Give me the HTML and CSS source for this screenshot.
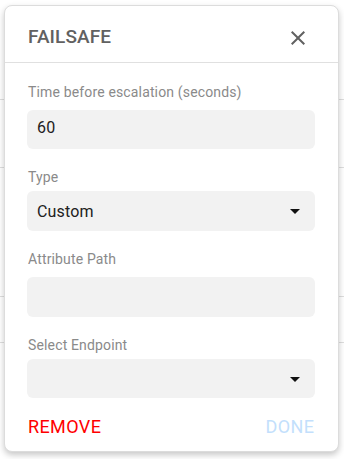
FILE: index.html
```html
<!DOCTYPE html>
<html>
<head>
<meta charset="utf-8">
<link rel="stylesheet" href="styles.css">
</head>
<body>
<div class="page">
  <div class="bg-row bg-row--a"></div>
  <div class="bg-row bg-row--b"></div>
  <div class="bg-row bg-row--c"></div>
  <div class="bg-row bg-row--d"></div>
</div>
<div class="dialog">
  <div class="dialog-header">
    <span class="dialog-title">FAILSAFE</span>
    <svg class="close-icon" viewBox="0 0 24 24" width="24" height="24"><path d="M19 6.41L17.59 5 12 10.59 6.41 5 5 6.41 10.59 12 5 17.59 6.41 19 12 13.41 17.59 19 19 17.59 13.41 12z" fill="#616161"/></svg>
  </div>
  <div class="dialog-body">
    <div class="field field--first">
      <div class="label">Time before escalation (seconds)</div>
      <div class="control control--input">60</div>
    </div>
    <div class="field field--select">
      <div class="label">Type</div>
      <div class="control control--select control--tall">
        <span>Custom</span>
        <svg class="arrow" viewBox="0 0 24 24" width="24" height="24"><path d="M7 10l5 5 5-5z" fill="#111"/></svg>
      </div>
    </div>
    <div class="field">
      <div class="label">Attribute Path</div>
      <div class="control control--input control--tall"></div>
    </div>
    <div class="field field--select field--last">
      <div class="label">Select Endpoint</div>
      <div class="control control--select">
        <span></span>
        <svg class="arrow" viewBox="0 0 24 24" width="24" height="24"><path d="M7 10l5 5 5-5z" fill="#111"/></svg>
      </div>
    </div>
  </div>
  <div class="dialog-actions">
    <span class="btn btn--remove">REMOVE</span>
    <span class="btn btn--done">DONE</span>
  </div>
</div>
</body>
</html>
```

FILE: styles.css
```css
html, body {
  margin: 0;
  padding: 0;
}
body {
  width: 344px;
  height: 459px;
  overflow: hidden;
  background: #ffffff;
  font-family: Roboto, "Liberation Sans", sans-serif;
  position: relative;
}
.page {
  display: flex;
  flex-direction: column;
}
.bg-row {
  border-bottom: 1px solid #dedede;
}
.bg-row--a { height: 99px; }
.bg-row--b { height: 67px; }
.bg-row--c { height: 128px; }
.bg-row--d { height: 45px; }

.dialog {
  position: absolute;
  left: 4px;
  top: 5px;
  width: 335px;
  height: 447px;
  box-sizing: border-box;
  background: #fff;
  border: 1px solid #dcdcdc;
  border-radius: 8px;
  box-shadow: 0 3px 6px rgba(0,0,0,0.22);
  display: flex;
  flex-direction: column;
}
.dialog-header {
  height: 57px;
  box-sizing: border-box;
  padding: 19px 0 0 23px;
  border-bottom: 1px solid #e0e0e0;
  display: flex;
  align-items: flex-start;
  justify-content: space-between;
}
.dialog-title {
  font-size: 19px;
  line-height: 23px;
  font-weight: 500;
  color: #616161;
  letter-spacing: 0.1px;
}
.close-icon {
  display: block;
  margin-top: 1px;
  margin-right: 28px;
}
.dialog-body {
  padding: 0 23px 0 22px;
  display: flex;
  flex-direction: column;
}
.field {
  margin-top: 20px;
  display: flex;
  flex-direction: column;
}
.field--first {
  margin-top: 21px;
}
.label {
  font-size: 14px;
  line-height: 16px;
  color: #8a8a8a;
  margin-left: 1px;
  letter-spacing: 0.15px;
}
.control {
  margin-top: 10px;
  height: 39px;
  box-sizing: border-box;
  background: #f2f2f2;
  border-radius: 6px;
  font-size: 16px;
  line-height: 19px;
  color: #212121;
  letter-spacing: 0.15px;
}
.control--tall {
  height: 40px;
}
.control--input {
  padding: 8px 10px 0;
}
.field--select .control {
  margin-top: 6px;
}
.control--select {
  display: flex;
  align-items: center;
  justify-content: space-between;
  padding: 0 8px 0 10px;
}
.arrow {
  display: block;
}
.dialog-actions {
  display: flex;
  justify-content: space-between;
  padding: 18px 24px 0 23px;
}
.btn {
  font-size: 18px;
  line-height: 21px;
  font-weight: 400;
  letter-spacing: 0.4px;
}
.btn--remove {
  color: #ff0000;
}
.btn--done {
  color: #c3dffc;
  margin-right: -0.4px;
}
```
